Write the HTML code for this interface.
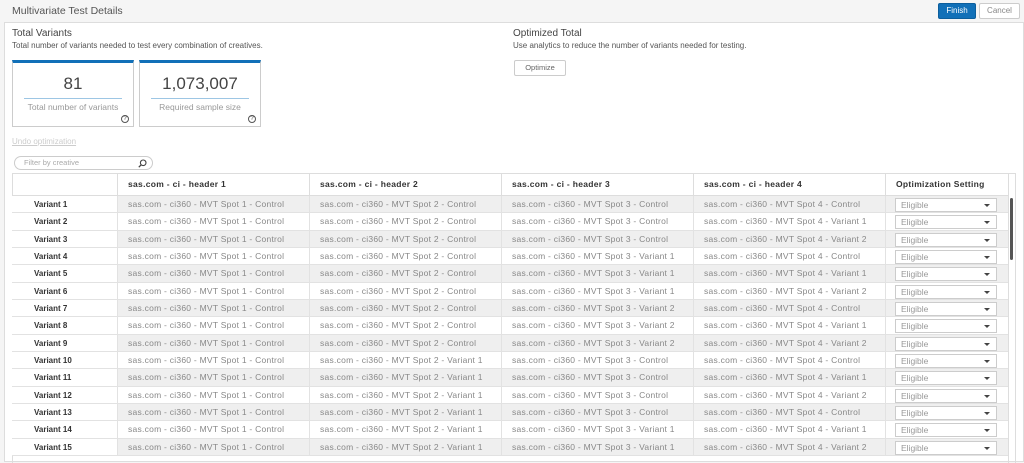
<!DOCTYPE html>
<html><head><meta charset="utf-8"><style>
*{box-sizing:border-box;margin:0;padding:0}
body{width:1024px;height:455px;overflow:hidden;background:#f5f5f5;font-family:"Liberation Sans",sans-serif;color:#444;position:relative}
.a{position:absolute}
.title{left:12px;top:5px;font-size:10.5px;color:#555}
.btn{height:16px;font-size:8px;text-align:center;line-height:14px;border-radius:2px}
.panel{left:4px;top:22px;width:1020px;height:440px;background:#fff;border:1px solid #ddd}
.card{width:122px;height:67px;border:1px solid #ccc;border-top:3px solid #1170b8;background:#fff}
.card .n{position:absolute;left:0;right:0;top:11px;text-align:center;font-size:17px;color:#444}
.card .l{position:absolute;left:11px;right:11px;top:35px;border-top:1px solid #9dc6e4}
.card .c{position:absolute;left:0;right:0;top:39px;text-align:center;font-size:8.5px;color:#999}
.card .q{position:absolute;right:4px;bottom:3px;width:8px;height:8px;border:1px solid #555;border-radius:50%;font-size:6px;line-height:6px;text-align:center}
.row{position:absolute;left:12px;width:996px;height:17.33px;border-bottom:1px solid #e2e2e2;font-size:8.5px;line-height:17px}
.row div{position:absolute;top:0;height:100%}
.g .d{background:#efefef}
.v{left:0;width:105px;padding-left:22px;font-weight:bold;color:#333;background:#fff;font-size:8px}
.d{color:#888;padding-left:10px;border-left:1px solid #e2e2e2;letter-spacing:0.25px;white-space:nowrap}
.sel{left:883px !important;top:2px !important;height:14px !important;width:102px;border:1px solid #ccc;background:#fff;font-size:8.5px;line-height:12px;padding-left:5px;color:#999}
.sel:after{content:"";position:absolute;right:6px;top:5px;border-left:3px solid transparent;border-right:3px solid transparent;border-top:3px solid #444}
.h{position:absolute;height:23px;border-left:1px solid #ddd;padding-left:10px;font-size:8.5px;letter-spacing:0.3px}
</style></head><body>
<div class="a title">Multivariate Test Details</div>
<div class="a btn" style="left:938px;top:3px;width:38px;background:#1170b8;color:#fff;border:1px solid #0c5e9c">Finish</div>
<div class="a btn" style="left:979px;top:3px;width:41px;background:#fff;color:#888;border:1px solid #ccc">Cancel</div>
<div class="a panel"></div>
<div class="a" style="left:12px;top:28px;font-size:10px;color:#444">Total Variants</div>
<div class="a" style="left:12px;top:41px;font-size:8px;color:#555">Total number of variants needed to test every combination of creatives.</div>
<div class="a card" style="left:12px;top:60px"><div class="n">81</div><div class="l"></div><div class="c">Total number of variants</div><div class="q">?</div></div>
<div class="a card" style="left:139px;top:60px"><div class="n">1,073,007</div><div class="l"></div><div class="c">Required sample size</div><div class="q">?</div></div>
<div class="a" style="left:12px;top:137px;font-size:8px;color:#ccc;text-decoration:underline">Undo optimization</div>
<div class="a" style="left:513px;top:28px;font-size:10px;color:#444">Optimized Total</div>
<div class="a" style="left:513px;top:41px;font-size:8px;color:#555">Use analytics to reduce the number of variants needed for testing.</div>
<div class="a btn" style="left:514px;top:60px;width:52px;border:1px solid #ccc;background:#fff;color:#666;font-size:7.5px;line-height:14px">Optimize</div>
<div class="a" style="left:14px;top:156px;width:139px;height:14px;border:1px solid #ccc;border-radius:8px;font-size:7.5px;color:#aaa;line-height:12px;padding-left:9px">Filter by creative
<svg class="a" style="right:5px;top:2px" width="9" height="9" viewBox="0 0 9 9"><circle cx="5.2" cy="3.8" r="2.8" fill="none" stroke="#444" stroke-width="1.1"/><path d="M3.2 5.8L0.8 8.2" stroke="#444" stroke-width="1.3"/></svg></div>
<div class="a" style="left:12px;top:173px;width:1004px;height:290px;border:1px solid #ddd;border-bottom:none"></div>
<div class="a" style="left:12px;top:173px;width:996px;height:23px;border-bottom:1px solid #ddd;font-weight:bold;color:#333;line-height:23px">
<div class="h" style="left:105px;width:192px">sas.com - ci - header 1</div>
<div class="h" style="left:297px;width:192px">sas.com - ci - header 2</div>
<div class="h" style="left:489px;width:192px">sas.com - ci - header 3</div>
<div class="h" style="left:681px;width:192px">sas.com - ci - header 4</div>
<div class="h" style="left:873px;width:123px">Optimization Setting</div>
</div>
<div class="a" style="left:1008px;top:173px;width:1px;height:290px;background:#ddd"></div>
<div class="a" style="left:1010px;top:198px;width:3px;height:62px;background:#555;border-radius:2px"></div>
<div id="rows"></div>
<script>
var s2=["Control","Control","Control","Control","Control","Control","Control","Control","Control","Variant 1","Variant 1","Variant 1","Variant 1","Variant 1","Variant 1"];
var s3=["Control","Control","Control","Variant 1","Variant 1","Variant 1","Variant 2","Variant 2","Variant 2","Control","Control","Control","Control","Variant 1","Variant 1"];
var s4=["Control","Variant 1","Variant 2"];
var h="";
for(var i=0;i<15;i++){
var t=(196+i*17.33).toFixed(2);
h+='<div class="row'+(i%2==0?' g':'')+'" style="top:'+t+'px"><div class="v">Variant '+(i+1)+'</div>'+
'<div class="d" style="left:105px;width:192px">sas.com - ci360 - MVT Spot 1 - Control</div>'+
'<div class="d" style="left:297px;width:192px">sas.com - ci360 - MVT Spot 2 - '+s2[i]+'</div>'+
'<div class="d" style="left:489px;width:192px">sas.com - ci360 - MVT Spot 3 - '+s3[i]+'</div>'+
'<div class="d" style="left:681px;width:192px">sas.com - ci360 - MVT Spot 4 - '+s4[i%3]+'</div>'+
'<div class="d" style="left:873px;width:123px;padding:0"></div>'+
'<div class="sel">Eligible</div></div>';}
document.getElementById("rows").innerHTML=h;
</script>
</body></html>
